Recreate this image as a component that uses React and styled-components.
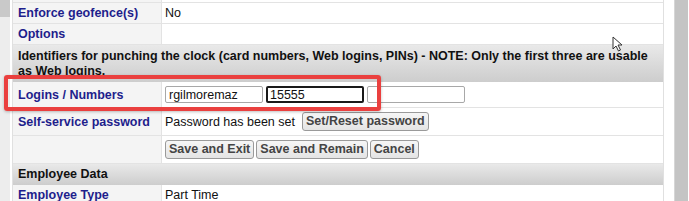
import React from "react";
import styled, { createGlobalStyle } from "styled-components";

const Global = createGlobalStyle`
  html, body { margin: 0; padding: 0; background: #fff; }
  body { font-family: "Liberation Sans", Arial, sans-serif; font-size: 12.5px; color: #111; }
`;

const Page = styled.div`
  position: relative;
  width: 689px;
  height: 201px;
  overflow: hidden;
  display: flex;
  background: #fff;
`;

const LeftStrip = styled.div`
  width: 10px;
  flex: none;
  background: #ededed;
  display: flex;
  flex-direction: column;
`;

const LeftThumb = styled.div`
  height: 17px;
  background: #c9c9c9;
`;

const Gutter = styled.div`
  width: ${(p) => p.$w}px;
  flex: none;
  background: #fff;
`;

const Table = styled.div`
  width: 652px;
  flex: none;
  display: flex;
  flex-direction: column;
  border-left: 1px solid #e0e0e0;
  border-right: 1px solid #e0e0e0;
  box-sizing: border-box;
`;

const Row = styled.div`
  display: grid;
  grid-template-columns: 149px 1fr;
  height: ${(p) => p.$h}px;
  border-bottom: 1px solid #e3e3e3;
  flex: none;
`;

const Label = styled.div`
  background: #f4f4f4;
  border-right: 1px solid #e3e3e3;
  color: #1e1e8c;
  font-weight: bold;
  padding-left: 5px;
  display: flex;
  align-items: center;
  white-space: nowrap;
`;

const Value = styled.div`
  padding-left: 3px;
  display: flex;
  align-items: center;
  gap: ${(p) => p.$gap || 0}px;
  white-space: nowrap;
  color: #111;
`;

const Header = styled.div`
  height: ${(p) => p.$h}px;
  flex: none;
  background: linear-gradient(#e9e9e9, #cdcdcd);
  font-weight: bold;
  color: #111;
  padding: ${(p) => p.$pt}px 10px 0 5px;
  box-sizing: border-box;
  line-height: 15px;
`;

const Input = styled.input`
  width: ${(p) => p.$w}px;
  height: 17px;
  box-sizing: border-box;
  border: ${(p) => (p.$focus ? "2px solid #1a1a1a" : "1px solid #a8a8a8")};
  border-radius: 2px;
  padding: 0 ${(p) => (p.$focus ? 2 : 3)}px;
  font-family: "Liberation Sans", Arial, sans-serif;
  font-size: 12.5px;
  color: #111;
  background: #fff;
  outline: none;
  margin: 0;
`;

const Button = styled.button`
  height: 19px;
  box-sizing: border-box;
  border: 1px solid #9a9a9a;
  border-radius: 3px;
  background: linear-gradient(#f6f6f6, #e4e4e4);
  color: #444;
  font-family: "Liberation Sans", Arial, sans-serif;
  font-size: 12.5px;
  font-weight: bold;
  padding: 0 3px;
  margin: 0;
  line-height: 17px;
`;

const Scrollbar = styled.div`
  width: 14px;
  flex: none;
  background: #c4c4c4;
  border-left: 1px solid #d6d6d6;
  box-sizing: border-box;
`;

const Highlight = styled.div`
  position: absolute;
  left: 4px;
  top: 75px;
  width: 377px;
  height: 36px;
  box-sizing: border-box;
  border: 4px solid #ea403f;
  border-radius: 3px;
  box-shadow: 0 1px 3px rgba(0, 0, 0, 0.25);
  pointer-events: none;
`;

const Cursor = styled.svg`
  position: absolute;
  left: 612px;
  top: 36px;
`;

export default function App() {
  return (
    <>
      <Global />
      <Page>
        <LeftStrip>
          <LeftThumb />
        </LeftStrip>
        <Gutter $w={2} />
        <Table>
          <Row $h={2}>
            <Label />
            <Value />
          </Row>
          <Row $h={20}>
            <Label>Enforce geofence(s)</Label>
            <Value>No</Value>
          </Row>
          <Row $h={20}>
            <Label>Options</Label>
            <Value />
          </Row>
          <Header $h={37} $pt={4}>
            Identifiers for punching the clock (card numbers, Web logins, PINs) - NOTE: Only the first three are usable as Web logins.
          </Header>
          <Row $h={25}>
            <Label>Logins / Numbers</Label>
            <Value $gap={3}>
              <Input $w={98} defaultValue="rgilmoremaz" />
              <Input $w={98} $focus defaultValue="15555" />
              <Input $w={98} defaultValue="" />
            </Value>
          </Row>
          <Row $h={27}>
            <Label>Self-service password</Label>
            <Value $gap={7}>
              <span>Password has been set</span>
              <Button>Set/Reset password</Button>
            </Value>
          </Row>
          <Row $h={27}>
            <Label />
            <Value $gap={2}>
              <Button>Save and Exit</Button>
              <Button>Save and Remain</Button>
              <Button>Cancel</Button>
            </Value>
          </Row>
          <Header $h={21} $pt={3}>
            Employee Data
          </Header>
          <Row $h={20}>
            <Label>Employee Type</Label>
            <Value>Part Time</Value>
          </Row>
        </Table>
        <Gutter $w={10} />
        <Scrollbar />
        <Highlight />
        <Cursor width="12" height="16" viewBox="0 0 12 16">
          <path d="M1 1 L1 13 L4 10 L6.5 15 L8.5 14 L6 9 L10 9 Z" fill="#fff" stroke="#333" strokeWidth="1" strokeLinejoin="round" />
        </Cursor>
      </Page>
    </>
  );
}
